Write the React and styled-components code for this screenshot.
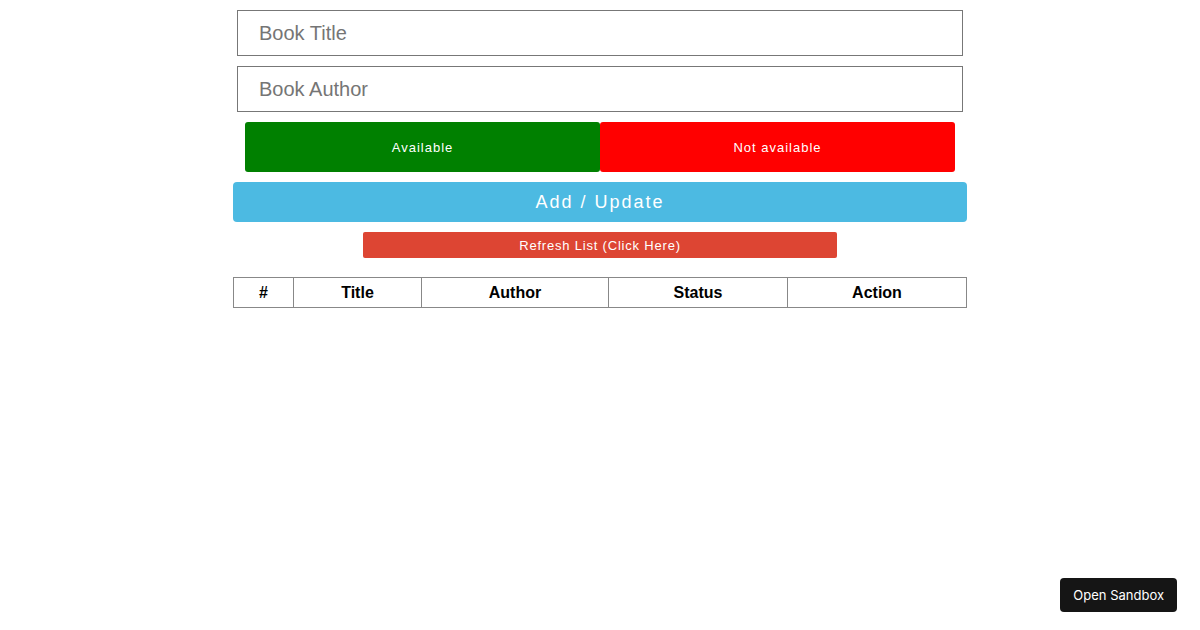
import React from 'react'
import styled, { createGlobalStyle } from 'styled-components'

const Global = createGlobalStyle`
  body { margin: 0; background: #fff; font-family: "Liberation Sans", Arial, sans-serif; }
`

const Page = styled.div`
  width: 734px;
  margin: 0 auto;
  padding-top: 10px;
  display: flex;
  flex-direction: column;
  align-items: center;
`

const Input = styled.input`
  box-sizing: border-box;
  width: 726px;
  height: 46px;
  margin-bottom: 10px;
  padding: 0 21px;
  border: 1px solid #777;
  font-family: inherit;
  font-size: 20px;
  color: #333;
  outline: none;
  &::placeholder { color: #757575; }
`

const StatusRow = styled.div`
  display: flex;
  width: 710px;
  margin-bottom: 10px;
`

const StatusButton = styled.button`
  flex: 1;
  height: 50px;
  border: none;
  border-radius: 3px;
  background: ${p => p.bg};
  color: #fff;
  font-family: inherit;
  font-size: 13px;
  letter-spacing: 1px;
`

const AddButton = styled.button`
  width: 734px;
  height: 40px;
  border: none;
  border-radius: 4px;
  background: #4cbae2;
  color: #fff;
  font-family: inherit;
  font-size: 18px;
  letter-spacing: 2px;
  margin-bottom: 10px;
`

const RefreshButton = styled.button`
  width: 474px;
  height: 26px;
  border: none;
  border-radius: 2px;
  background: #dd4533;
  color: #fff;
  font-family: inherit;
  font-size: 13px;
  letter-spacing: 0.8px;
  margin-bottom: 19px;
`

const Table = styled.table`
  width: 734px;
  border-collapse: collapse;
  th {
    border: 1px solid #888;
    height: 29px;
    padding: 0;
    font-size: 16px;
    font-weight: bold;
    color: #000;
  }
`

const SandboxButton = styled.button`
  position: fixed;
  right: 23px;
  bottom: 18px;
  height: 34px;
  padding: 0 13px;
  border: none;
  border-radius: 4px;
  background: #151515;
  color: #fff;
  font-family: Inter, "Liberation Sans", sans-serif;
  font-size: 13px;
`

export default function App() {
  return (
    <>
      <Global />
      <Page>
        <Input placeholder="Book Title" />
        <Input placeholder="Book Author" />
        <StatusRow>
          <StatusButton bg="#008000">Available</StatusButton>
          <StatusButton bg="#ff0000">Not available</StatusButton>
        </StatusRow>
        <AddButton>Add / Update</AddButton>
        <RefreshButton>Refresh List (Click Here)</RefreshButton>
        <Table>
          <thead>
            <tr>
              <th style={{ width: 59 }}>#</th>
              <th style={{ width: 127 }}>Title</th>
              <th style={{ width: 186 }}>Author</th>
              <th style={{ width: 178 }}>Status</th>
              <th>Action</th>
            </tr>
          </thead>
        </Table>
      </Page>
      <SandboxButton>Open Sandbox</SandboxButton>
    </>
  )
}
